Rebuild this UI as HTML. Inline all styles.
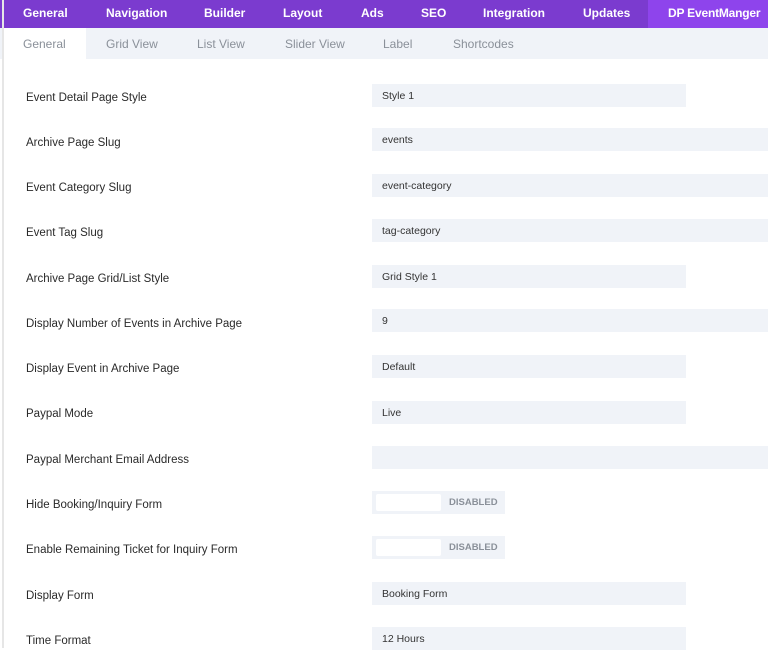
<!DOCTYPE html>
<html><head><meta charset="utf-8"><style>
*{margin:0;padding:0;box-sizing:border-box}
body{width:768px;height:648px;overflow:hidden;background:#fff;font-family:"Liberation Sans",sans-serif;position:relative}
.top{position:absolute;left:0;top:0;width:768px;height:28px;background:#7b3bcf}
.top span{position:absolute;top:6px;color:#fff;font-weight:bold;font-size:12px}
.act{position:absolute;left:648px;top:0;width:120px;height:28px;background:#8e44ec}
.sub{position:absolute;left:0;top:28px;width:768px;height:31px;background:#f0f3f8}
.sub .w{position:absolute;left:2px;top:0;width:84px;height:31px;background:#fff}
.sub span{position:absolute;top:9px;color:#8a9099;font-size:12px}
.lb{position:absolute;left:2px;top:0;width:2px;height:648px;background:#e6e6e6}
.lab{position:absolute;left:26px;font-size:11.5px;color:#2a2a2a}
.in{position:absolute;left:372px;height:23px;background:#f0f3f8;font-size:10.5px;color:#333;padding:6px 10px}
.tg{position:absolute;left:372px;width:133px;height:23px;background:#f0f3f8}
.tg i{position:absolute;left:4px;top:3px;width:65px;height:17px;background:#fff;border-radius:2px}
.tg b{position:absolute;left:77px;top:6px;font-size:9.5px;color:#8a9099}
</style></head><body>
<div class="top"><div class="act"></div>
<span style="left:23px">General</span><span style="left:106px">Navigation</span><span style="left:204px">Builder</span><span style="left:283px">Layout</span><span style="left:361px">Ads</span><span style="left:421px">SEO</span><span style="left:483px">Integration</span><span style="left:583px">Updates</span><span style="left:668px;letter-spacing:-0.2px">DP EventManger</span></div>
<div class="sub"><div class="w"></div>
<span style="left:23px">General</span><span style="left:106px">Grid View</span><span style="left:197px">List View</span><span style="left:285px">Slider View</span><span style="left:383px">Label</span><span style="left:453px">Shortcodes</span></div>
<div class="lb"></div>

<div class="lab" style="top:92px">Event Detail Page Style</div><div class="in" style="top:84px;width:314px">Style 1</div>
<div class="lab" style="top:137px">Archive Page Slug</div><div class="in" style="top:128px;width:396px">events</div>
<div class="lab" style="top:182px">Event Category Slug</div><div class="in" style="top:174px;width:396px">event-category</div>
<div class="lab" style="top:227px">Event Tag Slug</div><div class="in" style="top:219px;width:396px">tag-category</div>
<div class="lab" style="top:273px">Archive Page Grid/List Style</div><div class="in" style="top:265px;width:314px">Grid Style 1</div>
<div class="lab" style="top:318px">Display Number of Events in Archive Page</div><div class="in" style="top:309px;width:396px">9</div>
<div class="lab" style="top:363px">Display Event in Archive Page</div><div class="in" style="top:355px;width:314px">Default</div>
<div class="lab" style="top:408px">Paypal Mode</div><div class="in" style="top:401px;width:314px">Live</div>
<div class="lab" style="top:454px">Paypal Merchant Email Address</div><div class="in" style="top:446px;width:396px"></div>
<div class="lab" style="top:499px">Hide Booking/Inquiry Form</div><div class="tg" style="top:491px"><i></i><b>DISABLED</b></div>
<div class="lab" style="top:544px">Enable Remaining Ticket for Inquiry Form</div><div class="tg" style="top:536px"><i></i><b>DISABLED</b></div>
<div class="lab" style="top:590px">Display Form</div><div class="in" style="top:582px;width:314px">Booking Form</div>
<div class="lab" style="top:635px">Time Format</div><div class="in" style="top:627px;width:314px">12 Hours</div>
</body></html>
